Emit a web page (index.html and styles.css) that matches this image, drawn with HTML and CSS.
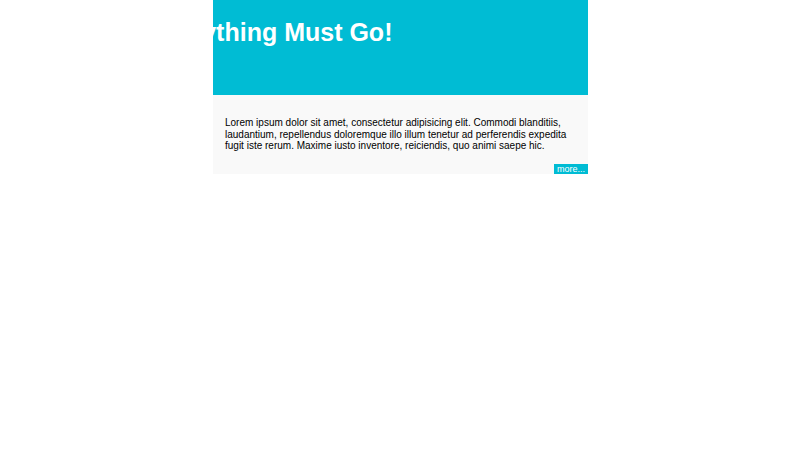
FILE: index.html
```
<!DOCTYPE html>
<html lang="en">
<head>
<meta charset="utf-8">
<title>Everything Must Go!</title>
<link rel="stylesheet" href="styles.css">
</head>
<body>
<article class="card">
  <header class="card-head">
    <h1 class="card-title">Everything Must Go!</h1>
  </header>
  <div class="card-body">
    <p class="card-text">Lorem ipsum dolor sit amet, consectetur adipisicing elit. Commodi blanditiis, laudantium, repellendus doloremque illo illum tenetur ad perferendis expedita fugit iste rerum. Maxime iusto inventore, reiciendis, quo animi saepe hic.</p>
  </div>
  <div class="card-actions">
    <a class="more" href="#">more...</a>
  </div>
</article>
</body>
</html>
```
FILE: styles.css
```
html, body {
  margin: 0;
  padding: 0;
  background: #ffffff;
}
body {
  font-family: "Liberation Sans", Arial, sans-serif;
}
.card {
  width: 375px;
  margin: 0 auto;
  background: #f9f9f9;
}
.card-head {
  height: 95px;
  box-sizing: border-box;
  padding-top: 18px;
  background: #00bcd4;
  overflow: hidden;
}
.card-title {
  margin: 0 0 0 -64.5px;
  font-size: 25px;
  font-weight: bold;
  color: #ffffff;
  white-space: nowrap;
}
.card-body {
  padding: 22px 12.5px 0;
}
.card-text {
  margin: 0;
  font-size: 10px;
  line-height: 11.5px;
  color: #000000;
}
.card-actions {
  display: flex;
  justify-content: flex-end;
  margin-top: 12.5px;
}
.more {
  display: block;
  padding: 0 2.5px;
  height: 10px;
  line-height: 10px;
  font-size: 9px;
  color: #ffffff;
  background: #00bcd4;
  text-decoration: none;
}
```
